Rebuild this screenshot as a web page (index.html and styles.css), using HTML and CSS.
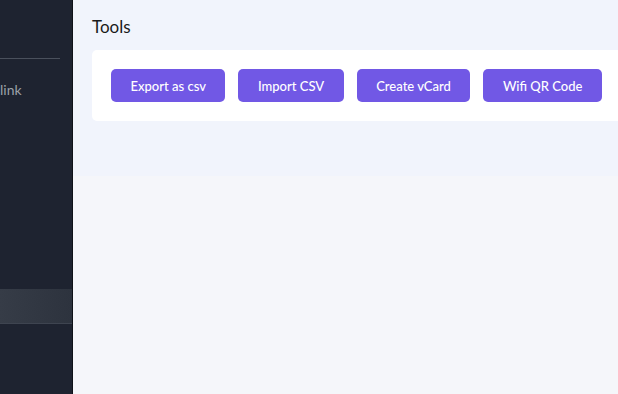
FILE: index.html
```html
<!DOCTYPE html>
<html>
<head>
<meta charset="utf-8">
<link rel="stylesheet" href="styles.css">
</head>
<body>
<div class="app">
  <aside class="sidebar">
    <div class="side-divider"></div>
    <div class="side-link">link</div>
    <div class="side-spacer"></div>
    <div class="side-active"></div>
  </aside>
  <main class="main">
    <section class="tools">
      <h1 class="title">Tools</h1>
      <div class="card">
        <button class="btn">Export as csv</button>
        <button class="btn">Import CSV</button>
        <button class="btn">Create vCard</button>
        <button class="btn">Wifi QR Code</button>
      </div>
    </section>
  </main>
</div>
</body>
</html>
```
FILE: styles.css
```css
* { box-sizing: border-box; }
html, body { margin: 0; padding: 0; height: 100%; }
body { font-family: "Lato", "Open Sans", sans-serif; overflow: hidden; }
.app { display: flex; height: 394px; }
.sidebar {
  width: 73px;
  flex: none;
  background: #1e2330;
  border-right: 1px solid #0f1218;
  display: flex;
  flex-direction: column;
}
.side-divider { margin-top: 58px; height: 1px; width: 60px; background: #4a505c; }
.side-link { margin: 21px 0 0 0; color: #9aa0a8; font-size: 14px; line-height: 20px; }
.side-spacer { height: 189px; }
.side-active {
  height: 35px;
  background: linear-gradient(90deg, #363c47, #2d333e);
  border-bottom: 1px solid #3e4450;
}
.main { flex: 1; background: #f5f6fa; }
.tools { background: #f1f4fc; height: 176px; padding: 16px 0 0 19px; }
.title { margin: 0; font-size: 17px; font-weight: 400; color: #1a1a1a; line-height: 22px; }
.card {
  margin-top: 12px;
  background: #ffffff;
  border-radius: 5px 0 0 5px;
  padding: 19px 19px;
  display: flex;
  gap: 13px;
}
.btn {
  font-family: inherit;
  height: 33px;
  padding: 0 19.5px;
  border: none;
  border-radius: 5px;
  background: #7158e5;
  color: #ffffff;
  font-size: 13px;
  font-weight: 500;
  white-space: nowrap;
}
```
